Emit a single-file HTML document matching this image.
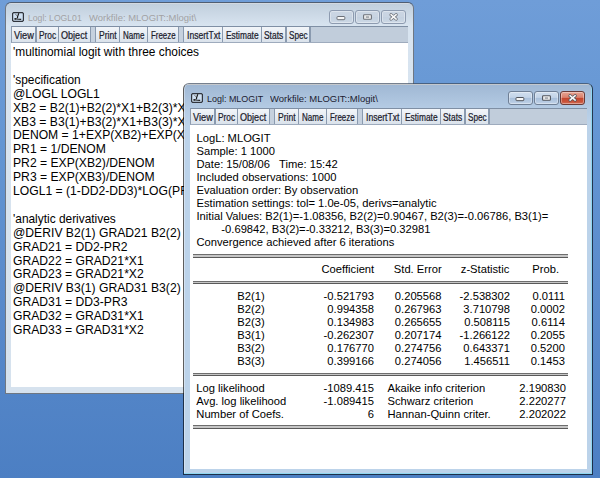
<!DOCTYPE html>
<html><head><meta charset="utf-8">
<style>
*{margin:0;padding:0;box-sizing:border-box}
html,body{width:600px;height:478px;overflow:hidden}
body{position:relative;background:linear-gradient(#6f9dd8 0%,#6496d3 30%,#5a8bcc 60%,#4c7fc3 100%);font-family:"Liberation Sans",sans-serif}
.win{position:absolute;border:1px solid #6f7782;border-radius:6px 6px 0 0;background-clip:padding-box}
#w1{left:5px;top:2px;width:409px;height:392px;border-top-color:#505e72;background-image:linear-gradient(#d3d9e0 0px,#d3d9e0 1px,#c1cfdd 1px,#d8e4f0 23px,#d6e2ee 100%);background-color:#d6e2ee}
#w2{left:183px;top:83px;width:410px;height:392px;background-image:linear-gradient(#c4c8cd 0px,#c4c8cd 1px,#a0b8d4 1px,#b3cae3 23px,#bcd3ea 40px,#bcd3ea 100%);background-color:#bcd3ea;border-color:rgba(0,0,0,0.63);border-top-color:rgba(60,75,95,0.7);box-shadow:inset -1px -1px 0 #8fd6f0,inset 1px 0 0 rgba(255,255,255,0.35)}
.tb{position:absolute;height:17px;background:#c1cddb;border-top:1px solid #7f8fa4;border-bottom:1px solid #9eabbd;border-left:1px solid #8f9db0}
.gap{position:absolute;height:15px;background:#c6d1de}
.btn{position:absolute;height:15px;border-right:2px solid #8a9aaf;background:linear-gradient(#f2f5f9,#e6ecf2 50%,#dae2eb);font-size:10px;color:#1a1a24;line-height:17px;text-align:center;white-space:nowrap;overflow:hidden;-webkit-text-stroke:0.15px #1a1a24}
.btn span{display:inline-block;transform:scaleX(0.9)}
.content{position:absolute;background:#fff;overflow:hidden}
.t1{position:absolute;left:0;font-size:13px;line-height:13.9px;white-space:pre;color:#000;transform-origin:0 0}
.t2{position:absolute;font-size:11.2px;line-height:13px;white-space:pre;color:#000}
.title{position:absolute;font-size:10px;white-space:pre;transform:scaleX(0.87);transform-origin:0 50%}
.ticon{position:absolute;width:12px;height:10px;border:1px solid #333;border-radius:2px;background:#cfe0f0}
.cb{position:absolute;height:14px;border:1px solid #8c9bb0;border-radius:3px;background:linear-gradient(#e6edf5,#d0dbe8 50%,#c3d1e1 51%,#d3deea)}
.rule{position:absolute;height:4px;border-top:1px solid #6e6e6e;border-bottom:1px solid #5a5a5a;background:#c6c6c6}
.r{text-align:right}
</style></head><body>
<div class="win" id="w1">
<div class="tb" style="left:5px;top:23px;width:397px"></div>
<div class="gap" style="left:85px;top:24px;width:4px"></div>
<div class="gap" style="left:173px;top:24px;width:4px"></div>
<div class="btn" style="left:6px;top:24px;width:25px;border-right-width:2px"></div>
<div class="btn" style="left:31px;top:24px;width:22px;border-right-width:1px"></div>
<div class="btn" style="left:53px;top:24px;width:32px;border-right-width:1px"></div>
<div class="btn" style="left:89px;top:24px;width:25px;border-right-width:1px;border-left:1px solid #8a9aaf"></div>
<div class="btn" style="left:114px;top:24px;width:28px;border-right-width:1px"></div>
<div class="btn" style="left:142px;top:24px;width:31px;border-right-width:1px"></div>
<div class="btn" style="left:177px;top:24px;width:40px;border-right-width:1px;border-left:1px solid #8a9aaf"></div>
<div class="btn" style="left:217px;top:24px;width:39px;border-right-width:1px"></div>
<div class="btn" style="left:256px;top:24px;width:25px;border-right-width:2px"></div>
<div class="btn" style="left:281px;top:24px;width:24px;border-right-width:2px"></div>
<div class="content" style="left:5px;top:40px;width:397px;height:344px">
<div class="t1" style="left:2px;top:2.0px;transform:scaleX(0.915)">'multinomial logit with three choices</div>
<div class="t1" style="left:2px;top:29.8px;transform:scaleX(0.915)">'specification</div>
<div class="t1" style="left:2px;top:43.7px;transform:scaleX(0.935)">@LOGL LOGL1</div>
<div class="t1" style="left:2px;top:57.6px;transform:scaleX(0.935)">XB2 = B2(1)+B2(2)*X1+B2(3)*X2</div>
<div class="t1" style="left:2px;top:71.5px;transform:scaleX(0.935)">XB3 = B3(1)+B3(2)*X1+B3(3)*X2</div>
<div class="t1" style="left:2px;top:85.4px;transform:scaleX(0.935)">DENOM = 1+EXP(XB2)+EXP(XB3)</div>
<div class="t1" style="left:2px;top:99.3px;transform:scaleX(0.935)">PR1 = 1/DENOM</div>
<div class="t1" style="left:2px;top:113.2px;transform:scaleX(0.935)">PR2 = EXP(XB2)/DENOM</div>
<div class="t1" style="left:2px;top:127.1px;transform:scaleX(0.935)">PR3 = EXP(XB3)/DENOM</div>
<div class="t1" style="left:2px;top:141.0px;transform:scaleX(0.935)">LOGL1 = (1-DD2-DD3)*LOG(PR1)+DD2*LOG(PR2)+DD3*LOG(PR3)</div>
<div class="t1" style="left:2px;top:168.8px;transform:scaleX(0.915)">'analytic derivatives</div>
<div class="t1" style="left:2px;top:182.7px;transform:scaleX(0.935)">@DERIV B2(1) GRAD21 B2(2) GRAD22 B2(3) GRAD23</div>
<div class="t1" style="left:2px;top:196.6px;transform:scaleX(0.935)">GRAD21 = DD2-PR2</div>
<div class="t1" style="left:2px;top:210.5px;transform:scaleX(0.935)">GRAD22 = GRAD21*X1</div>
<div class="t1" style="left:2px;top:224.4px;transform:scaleX(0.935)">GRAD23 = GRAD21*X2</div>
<div class="t1" style="left:2px;top:238.3px;transform:scaleX(0.935)">@DERIV B3(1) GRAD31 B3(2) GRAD32 B3(3) GRAD33</div>
<div class="t1" style="left:2px;top:252.2px;transform:scaleX(0.935)">GRAD31 = DD3-PR3</div>
<div class="t1" style="left:2px;top:266.1px;transform:scaleX(0.935)">GRAD32 = GRAD31*X1</div>
<div class="t1" style="left:2px;top:280.0px;transform:scaleX(0.935)">GRAD33 = GRAD31*X2</div>
</div>
</div>
<div style="position:absolute;left:14.10px;top:25.53px;height:20px;line-height:20px;font-size:10px;white-space:pre;color:#20202c;transform:scaleX(0.9209);transform-origin:0 0;-webkit-text-stroke:0.22px #20202c">View</div>
<div style="position:absolute;left:38.60px;top:25.53px;height:20px;line-height:20px;font-size:10px;white-space:pre;color:#20202c;transform:scaleX(0.8316);transform-origin:0 0;-webkit-text-stroke:0.22px #20202c">Proc</div>
<div style="position:absolute;left:61.00px;top:25.53px;height:20px;line-height:20px;font-size:10px;white-space:pre;color:#20202c;transform:scaleX(0.9064);transform-origin:0 0;-webkit-text-stroke:0.22px #20202c">Object</div>
<div style="position:absolute;left:98.80px;top:25.53px;height:20px;line-height:20px;font-size:10px;white-space:pre;color:#20202c;transform:scaleX(0.8559);transform-origin:0 0;-webkit-text-stroke:0.22px #20202c">Print</div>
<div style="position:absolute;left:122.80px;top:25.53px;height:20px;line-height:20px;font-size:10px;white-space:pre;color:#20202c;transform:scaleX(0.8019);transform-origin:0 0;-webkit-text-stroke:0.22px #20202c">Name</div>
<div style="position:absolute;left:150.60px;top:25.53px;height:20px;line-height:20px;font-size:10px;white-space:pre;color:#20202c;transform:scaleX(0.7904);transform-origin:0 0;-webkit-text-stroke:0.22px #20202c">Freeze</div>
<div style="position:absolute;left:186.50px;top:25.53px;height:20px;line-height:20px;font-size:10px;white-space:pre;color:#20202c;transform:scaleX(0.8585);transform-origin:0 0;-webkit-text-stroke:0.22px #20202c">InsertTxt</div>
<div style="position:absolute;left:225.60px;top:25.53px;height:20px;line-height:20px;font-size:10px;white-space:pre;color:#20202c;transform:scaleX(0.8379);transform-origin:0 0;-webkit-text-stroke:0.22px #20202c">Estimate</div>
<div style="position:absolute;left:264.00px;top:25.53px;height:20px;line-height:20px;font-size:10px;white-space:pre;color:#20202c;transform:scaleX(0.8422);transform-origin:0 0;-webkit-text-stroke:0.22px #20202c">Stats</div>
<div style="position:absolute;left:289.00px;top:25.53px;height:20px;line-height:20px;font-size:10px;white-space:pre;color:#20202c;transform:scaleX(0.8203);transform-origin:0 0;-webkit-text-stroke:0.22px #20202c">Spec</div>
<svg style="position:absolute;left:12px;top:12px" width="12" height="10" viewBox="0 0 12 10"><polygon points="1.6,0.6 10.4,0.6 11.4,1.6 11.4,8.4 10.4,9.4 1.6,9.4 0.6,8.4 0.6,1.6" fill="#cfe0f2" stroke="#30343c" stroke-width="1.2"/><path d="M6.8 1.3 L5.6 4.6 L5.4 6.4" stroke="#1a1a1a" stroke-width="1.2" fill="none"/><path d="M3.2 1.8 L5.2 4" stroke="#707070" stroke-width="0.9" fill="none"/><path d="M2.6 7 Q3.6 6.4 4.8 7 L9.2 7.4" stroke="#1a1a1a" stroke-width="1.1" fill="none"/><ellipse cx="3.3" cy="7" rx="1" ry="0.75" fill="#1a1a1a"/></svg>
<div style="position:absolute;left:329px;top:10px;width:25px;height:14px;border:1px solid #8d9bb0;border-radius:3px;background:linear-gradient(#cbd6e3,#c8d4e2 50%,#c4d1e0 51%,#ccd8e5);box-shadow:inset 0 0 0 1px rgba(255,255,255,0.35)"></div>
<div style="position:absolute;left:355px;top:10px;width:25px;height:14px;border:1px solid #8d9bb0;border-radius:3px;background:linear-gradient(#cbd6e3,#c8d4e2 50%,#c4d1e0 51%,#ccd8e5);box-shadow:inset 0 0 0 1px rgba(255,255,255,0.35)"></div>
<div style="position:absolute;left:381px;top:10px;width:25px;height:14px;border:1px solid #8d9bb0;border-radius:3px;background:linear-gradient(#cbd6e3,#c8d4e2 50%,#c4d1e0 51%,#ccd8e5);box-shadow:inset 0 0 0 1px rgba(255,255,255,0.35)"></div>
<svg style="position:absolute;left:329px;top:10px" width="25" height="14" viewBox="0 0 25 14"><rect x="8" y="6.5" width="7.8" height="3.2" rx="0.8" fill="#f6f6f6" stroke="#6c7078" stroke-width="1"/></svg>
<svg style="position:absolute;left:355px;top:10px" width="25" height="14" viewBox="0 0 25 14"><rect x="8.6" y="4.7" width="7.8" height="4.6" rx="0.8" fill="#f4f4f4" stroke="#6c7078" stroke-width="1.1"/><rect x="10.8" y="6.4" width="3.4" height="1.3" fill="#8a8f96"/></svg>
<svg style="position:absolute;left:381px;top:10px" width="25" height="14" viewBox="0 0 25 14"><path d="M10 4.7 L15.2 9.1 M15.2 4.7 L10 9.1" stroke="#6c7078" stroke-width="3.1" stroke-linecap="round"/><path d="M10 4.7 L15.2 9.1 M15.2 4.7 L10 9.1" stroke="#f8f8f8" stroke-width="1.6" stroke-linecap="round"/></svg>
<div style="position:absolute;left:27.60px;top:7.71px;height:20px;line-height:20px;font-size:9.5px;white-space:pre;color:#a2a2a4;transform:scaleX(0.9078);transform-origin:0 0;">Logl: LOGL01</div>
<div style="position:absolute;left:89.30px;top:7.71px;height:20px;line-height:20px;font-size:9.5px;white-space:pre;color:#a2a2a4;transform:scaleX(0.9940);transform-origin:0 0;">Workfile: MLOGIT::Mlogit\</div>
<div class="win" id="w2">
<div class="tb" style="left:6px;top:24px;width:397px"></div>
<div class="gap" style="left:86px;top:25px;width:4px"></div>
<div class="gap" style="left:174px;top:25px;width:4px"></div>
<div class="btn" style="left:7px;top:25px;width:25px;border-right-width:2px"></div>
<div class="btn" style="left:32px;top:25px;width:22px;border-right-width:1px"></div>
<div class="btn" style="left:54px;top:25px;width:32px;border-right-width:1px"></div>
<div class="btn" style="left:90px;top:25px;width:25px;border-right-width:1px;border-left:1px solid #8a9aaf"></div>
<div class="btn" style="left:115px;top:25px;width:28px;border-right-width:1px"></div>
<div class="btn" style="left:143px;top:25px;width:31px;border-right-width:1px"></div>
<div class="btn" style="left:178px;top:25px;width:40px;border-right-width:1px;border-left:1px solid #8a9aaf"></div>
<div class="btn" style="left:218px;top:25px;width:39px;border-right-width:1px"></div>
<div class="btn" style="left:257px;top:25px;width:25px;border-right-width:2px"></div>
<div class="btn" style="left:282px;top:25px;width:24px;border-right-width:2px"></div>
<div class="content" style="left:6px;top:41px;width:397px;height:344px">
<div class="t2" style="left:6.5px;top:7.1px">LogL: MLOGIT</div>
<div class="t2" style="left:6.5px;top:20.1px">Sample: 1 1000</div>
<div class="t2" style="left:6.5px;top:33.1px">Date: 15/08/06   Time: 15:42</div>
<div class="t2" style="left:6.5px;top:46.1px">Included observations: 1000</div>
<div class="t2" style="left:6.5px;top:59.1px">Evaluation order: By observation</div>
<div class="t2" style="left:6.5px;top:72.1px">Estimation settings: tol= 1.0e-05, derivs=analytic</div>
<div class="t2" style="left:6.5px;top:85.1px">Initial Values: B2(1)=-1.08356, B2(2)=0.90467, B2(3)=-0.06786, B3(1)=</div>
<div class="t2" style="left:6.5px;top:98.1px">        -0.69842, B3(2)=-0.33212, B3(3)=0.32981</div>
<div class="t2" style="left:6.5px;top:111.1px">Convergence achieved after 6 iterations</div>
<div class="rule" style="left:3px;top:129px;width:375px;height:4px"></div>
<div class="rule" style="left:3px;top:156px;width:375px;height:3px"></div>
<div class="rule" style="left:3px;top:248px;width:375px;height:3px"></div>
<div class="rule" style="left:3px;top:300px;width:375px;height:4px"></div>
<div class="t2 r" style="left:34.2px;width:150px;top:138.4px">Coefficient</div>
<div class="t2 r" style="left:101.7px;width:150px;top:138.4px">Std. Error</div>
<div class="t2 r" style="left:169.3px;width:150px;top:138.4px">z-Statistic</div>
<div class="t2 r" style="left:219.0px;width:150px;top:138.4px">Prob.</div>
<div class="t2" style="left:-14.0px;width:150px;text-align:center;top:164.9px">B2(1)</div>
<div class="t2 r" style="left:34.0px;width:150px;top:164.9px">-0.521793</div>
<div class="t2 r" style="left:101.5px;width:150px;top:164.9px">0.205568</div>
<div class="t2 r" style="left:170.0px;width:150px;top:164.9px">-2.538302</div>
<div class="t2 r" style="left:225.0px;width:150px;top:164.9px">0.0111</div>
<div class="t2" style="left:-14.0px;width:150px;text-align:center;top:177.9px">B2(2)</div>
<div class="t2 r" style="left:34.0px;width:150px;top:177.9px">0.994358</div>
<div class="t2 r" style="left:101.5px;width:150px;top:177.9px">0.267963</div>
<div class="t2 r" style="left:170.0px;width:150px;top:177.9px">3.710798</div>
<div class="t2 r" style="left:225.0px;width:150px;top:177.9px">0.0002</div>
<div class="t2" style="left:-14.0px;width:150px;text-align:center;top:190.9px">B2(3)</div>
<div class="t2 r" style="left:34.0px;width:150px;top:190.9px">0.134983</div>
<div class="t2 r" style="left:101.5px;width:150px;top:190.9px">0.265655</div>
<div class="t2 r" style="left:170.0px;width:150px;top:190.9px">0.508115</div>
<div class="t2 r" style="left:225.0px;width:150px;top:190.9px">0.6114</div>
<div class="t2" style="left:-14.0px;width:150px;text-align:center;top:203.9px">B3(1)</div>
<div class="t2 r" style="left:34.0px;width:150px;top:203.9px">-0.262307</div>
<div class="t2 r" style="left:101.5px;width:150px;top:203.9px">0.207174</div>
<div class="t2 r" style="left:170.0px;width:150px;top:203.9px">-1.266122</div>
<div class="t2 r" style="left:225.0px;width:150px;top:203.9px">0.2055</div>
<div class="t2" style="left:-14.0px;width:150px;text-align:center;top:216.9px">B3(2)</div>
<div class="t2 r" style="left:34.0px;width:150px;top:216.9px">0.176770</div>
<div class="t2 r" style="left:101.5px;width:150px;top:216.9px">0.274756</div>
<div class="t2 r" style="left:170.0px;width:150px;top:216.9px">0.643371</div>
<div class="t2 r" style="left:225.0px;width:150px;top:216.9px">0.5200</div>
<div class="t2" style="left:-14.0px;width:150px;text-align:center;top:229.9px">B3(3)</div>
<div class="t2 r" style="left:34.0px;width:150px;top:229.9px">0.399166</div>
<div class="t2 r" style="left:101.5px;width:150px;top:229.9px">0.274056</div>
<div class="t2 r" style="left:170.0px;width:150px;top:229.9px">1.456511</div>
<div class="t2 r" style="left:225.0px;width:150px;top:229.9px">0.1453</div>
<div class="t2" style="left:6.3px;top:256.9px">Log likelihood</div>
<div class="t2 r" style="left:34.0px;width:150px;top:256.9px">-1089.415</div>
<div class="t2" style="left:197.5px;top:256.9px">Akaike info criterion</div>
<div class="t2 r" style="left:226.0px;width:150px;top:256.9px">2.190830</div>
<div class="t2" style="left:6.3px;top:269.9px">Avg. log likelihood</div>
<div class="t2 r" style="left:34.0px;width:150px;top:269.9px">-1.089415</div>
<div class="t2" style="left:197.5px;top:269.9px">Schwarz criterion</div>
<div class="t2 r" style="left:226.0px;width:150px;top:269.9px">2.220277</div>
<div class="t2" style="left:6.3px;top:282.9px">Number of Coefs.</div>
<div class="t2 r" style="left:34.0px;width:150px;top:282.9px">6</div>
<div class="t2" style="left:197.5px;top:282.9px">Hannan-Quinn criter.</div>
<div class="t2 r" style="left:226.0px;width:150px;top:282.9px">2.202022</div>
</div>
</div>
<div style="position:absolute;left:193.10px;top:107.53px;height:20px;line-height:20px;font-size:10px;white-space:pre;color:#20202c;transform:scaleX(0.9209);transform-origin:0 0;-webkit-text-stroke:0.22px #20202c">View</div>
<div style="position:absolute;left:217.60px;top:107.53px;height:20px;line-height:20px;font-size:10px;white-space:pre;color:#20202c;transform:scaleX(0.8316);transform-origin:0 0;-webkit-text-stroke:0.22px #20202c">Proc</div>
<div style="position:absolute;left:240.00px;top:107.53px;height:20px;line-height:20px;font-size:10px;white-space:pre;color:#20202c;transform:scaleX(0.9064);transform-origin:0 0;-webkit-text-stroke:0.22px #20202c">Object</div>
<div style="position:absolute;left:277.80px;top:107.53px;height:20px;line-height:20px;font-size:10px;white-space:pre;color:#20202c;transform:scaleX(0.8559);transform-origin:0 0;-webkit-text-stroke:0.22px #20202c">Print</div>
<div style="position:absolute;left:301.80px;top:107.53px;height:20px;line-height:20px;font-size:10px;white-space:pre;color:#20202c;transform:scaleX(0.8019);transform-origin:0 0;-webkit-text-stroke:0.22px #20202c">Name</div>
<div style="position:absolute;left:329.60px;top:107.53px;height:20px;line-height:20px;font-size:10px;white-space:pre;color:#20202c;transform:scaleX(0.7904);transform-origin:0 0;-webkit-text-stroke:0.22px #20202c">Freeze</div>
<div style="position:absolute;left:365.50px;top:107.53px;height:20px;line-height:20px;font-size:10px;white-space:pre;color:#20202c;transform:scaleX(0.8585);transform-origin:0 0;-webkit-text-stroke:0.22px #20202c">InsertTxt</div>
<div style="position:absolute;left:404.60px;top:107.53px;height:20px;line-height:20px;font-size:10px;white-space:pre;color:#20202c;transform:scaleX(0.8379);transform-origin:0 0;-webkit-text-stroke:0.22px #20202c">Estimate</div>
<div style="position:absolute;left:443.00px;top:107.53px;height:20px;line-height:20px;font-size:10px;white-space:pre;color:#20202c;transform:scaleX(0.8422);transform-origin:0 0;-webkit-text-stroke:0.22px #20202c">Stats</div>
<div style="position:absolute;left:468.00px;top:107.53px;height:20px;line-height:20px;font-size:10px;white-space:pre;color:#20202c;transform:scaleX(0.8203);transform-origin:0 0;-webkit-text-stroke:0.22px #20202c">Spec</div>
<svg style="position:absolute;left:191px;top:93px" width="12" height="10" viewBox="0 0 12 10"><polygon points="1.6,0.6 10.4,0.6 11.4,1.6 11.4,8.4 10.4,9.4 1.6,9.4 0.6,8.4 0.6,1.6" fill="#cfe0f2" stroke="#30343c" stroke-width="1.2"/><path d="M6.8 1.3 L5.6 4.6 L5.4 6.4" stroke="#1a1a1a" stroke-width="1.2" fill="none"/><path d="M3.2 1.8 L5.2 4" stroke="#707070" stroke-width="0.9" fill="none"/><path d="M2.6 7 Q3.6 6.4 4.8 7 L9.2 7.4" stroke="#1a1a1a" stroke-width="1.1" fill="none"/><ellipse cx="3.3" cy="7" rx="1" ry="0.75" fill="#1a1a1a"/></svg>
<div style="position:absolute;left:508px;top:91px;width:25px;height:14px;border:1px solid #6f7f95;border-radius:3px;background:linear-gradient(#d0deee,#c3d4e8 45%,#a9c0db 52%,#b6cae2 80%,#c2d4e8 100%);box-shadow:inset 0 0 0 1px rgba(255,255,255,0.35)"></div>
<div style="position:absolute;left:534px;top:91px;width:25px;height:14px;border:1px solid #6f7f95;border-radius:3px;background:linear-gradient(#d0deee,#c3d4e8 45%,#a9c0db 52%,#b6cae2 80%,#c2d4e8 100%);box-shadow:inset 0 0 0 1px rgba(255,255,255,0.35)"></div>
<div style="position:absolute;left:560px;top:91px;width:25px;height:14px;border:1px solid #6a3a36;border-radius:3px;background:linear-gradient(#e6a493,#db806c 45%,#c4462e 52%,#c9533a 80%,#d2705a);box-shadow:inset 0 0 0 1px rgba(255,255,255,0.35)"></div>
<svg style="position:absolute;left:508px;top:91px" width="25" height="14" viewBox="0 0 25 14"><rect x="8" y="6.5" width="7.8" height="3.2" rx="0.8" fill="#f6f6f6" stroke="#50545c" stroke-width="1"/></svg>
<svg style="position:absolute;left:534px;top:91px" width="25" height="14" viewBox="0 0 25 14"><rect x="8.6" y="4.7" width="7.8" height="4.6" rx="0.8" fill="#f4f4f4" stroke="#50545c" stroke-width="1.1"/><rect x="10.8" y="6.4" width="3.4" height="1.3" fill="#8a8f96"/></svg>
<svg style="position:absolute;left:560px;top:91px" width="25" height="14" viewBox="0 0 25 14"><path d="M10 4.7 L15.2 9.1 M15.2 4.7 L10 9.1" stroke="#50545c" stroke-width="3.1" stroke-linecap="round"/><path d="M10 4.7 L15.2 9.1 M15.2 4.7 L10 9.1" stroke="#f8f8f8" stroke-width="1.6" stroke-linecap="round"/></svg>
<div style="position:absolute;left:206.50px;top:88.71px;height:20px;line-height:20px;font-size:9.5px;white-space:pre;color:#1c1c30;transform:scaleX(0.9418);transform-origin:0 0;">Logl: MLOGIT</div>
<div style="position:absolute;left:270.00px;top:88.71px;height:20px;line-height:20px;font-size:9.5px;white-space:pre;color:#1c1c30;transform:scaleX(0.9977);transform-origin:0 0;">Workfile: MLOGIT::Mlogit\</div>
</body></html>
